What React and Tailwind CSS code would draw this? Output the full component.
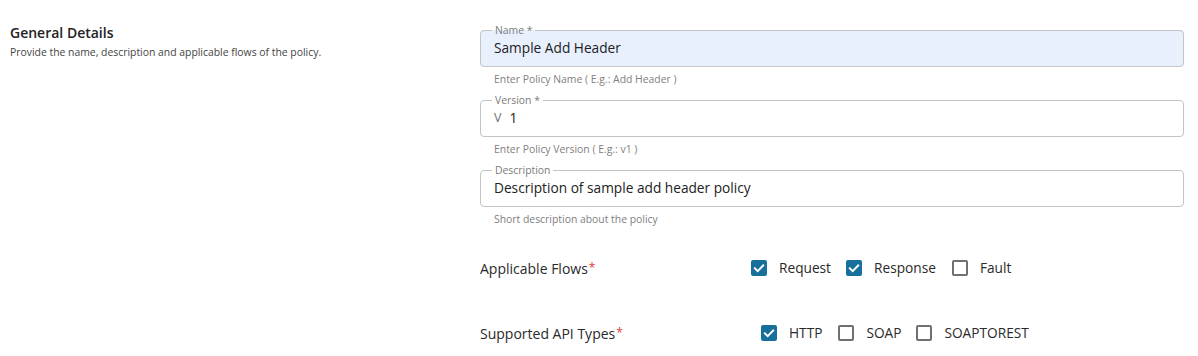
import React from "react";

const font = { fontFamily: '"Open Sans", "Noto Sans", sans-serif' };

function OutlinedField({ label, value, prefix, filled }) {
  return (
    <fieldset
      className={`border border-[#c4c4c4] rounded-[4px] px-[11px] m-0 min-w-0 ${filled ? "bg-[#e8f0fe]" : "bg-white"}`}
    >
      <legend className="px-[3px] text-[10.4px] leading-[14px] text-[#7c7c7c]">{label}</legend>
      <div className="mt-[1px] mb-[8px] h-[20px] pl-[2px] flex items-center text-[13.7px] leading-[20px] text-[#212121]">
        {prefix && <span className="text-[#6f6f6f] mr-[8px] text-[12.5px]">{prefix}</span>}
        <span>{value}</span>
      </div>
    </fieldset>
  );
}

function Field({ label, value, helper, prefix, filled }) {
  return (
    <div className="mb-[7px]">
      <OutlinedField label={label} value={value} prefix={prefix} filled={filled} />
      <p className="mt-[5px] pl-[14px] text-[10.4px] leading-[14px] text-[#808080]">{helper}</p>
    </div>
  );
}

function Check({ checked, label, gap }) {
  return (
    <label className={`flex items-center ${gap}`}>
      {checked ? (
        <svg width="16" height="16" viewBox="0 0 16 16" className="shrink-0">
          <rect x="0" y="0" width="16" height="16" rx="2" fill="#176f9c" />
          <path d="M3.8 8.3l2.9 2.8 5.5-5.7" fill="none" stroke="#fff" strokeWidth="1.9" strokeLinecap="square" />
        </svg>
      ) : (
        <span className="block w-[16px] h-[16px] shrink-0 rounded-[2px] border-2 border-[#707070] bg-white" />
      )}
      <span className="ml-[12px] text-[13.7px] leading-[20px] text-[#2a2a2a]">{label}</span>
    </label>
  );
}

function Required({ children }) {
  return (
    <span className="text-[14px] leading-[20px] text-[#2a2a2a]">
      {children}
      <sup className="text-[#e53935] text-[12px] ml-[1px] relative top-[-2px]">*</sup>
    </span>
  );
}

export default function App() {
  return (
    <div className="flex w-[1198px] h-[356px] bg-white overflow-hidden" style={font}>
      <div className="w-[480px] pl-[10px] pt-[23px] shrink-0">
        <h2 className="text-[14px] leading-[20px] font-semibold text-[#222]">General Details</h2>
        <p className="mt-[2px] text-[10.4px] leading-[14px] text-[#444]">
          Provide the name, description and applicable flows of the policy.
        </p>
      </div>
      <div className="flex-1 pr-[14px] pt-[23px]">
        <Field label="Name *" value="Sample Add Header" helper="Enter Policy Name ( E.g.: Add Header )" filled />
        <Field label="Version *" value="1" prefix="V" helper="Enter Policy Version ( E.g.: v1 )" />
        <Field label="Description" value="Description of sample add header policy" helper="Short description about the policy" />

        <div className="flex items-center h-[40px] mt-[22px]">
          <div className="w-[271px]">
            <Required>Applicable Flows</Required>
          </div>
          <Check checked label="Request" gap="mr-[15px]" />
          <Check checked label="Response" gap="mr-[16px]" />
          <Check label="Fault" />
        </div>

        <div className="flex items-center h-[40px] mt-[25px]">
          <div className="w-[281px]">
            <Required>Supported API Types</Required>
          </div>
          <Check checked label="HTTP" gap="mr-[16px]" />
          <Check label="SOAP" gap="mr-[15px]" />
          <Check label="SOAPTOREST" />
        </div>
      </div>
    </div>
  );
}
